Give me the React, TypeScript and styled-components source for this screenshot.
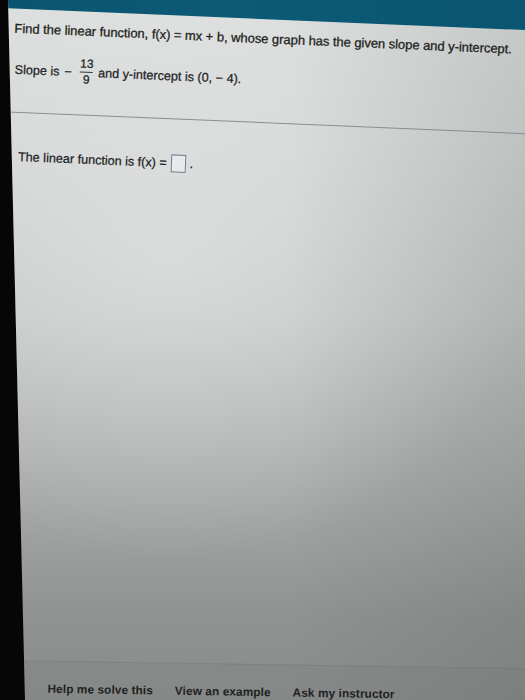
import React from "react";
import styled, { createGlobalStyle } from "styled-components";

const Global = createGlobalStyle`
  html, body { margin: 0; padding: 0; background: #050505; }
  body { font-family: "Liberation Sans", Arial, sans-serif; }
`;

const Page = styled.div`
  width: 525px;
  height: 700px;
  overflow: hidden;
  background: #060606;
`;

const Screen = styled.div`
  height: 100%;
  display: flex;
  flex-direction: column;
  overflow: hidden;
  clip-path: polygon(8px 0, 100% 0, 100% 100%, 25px 100%);
  background:
    linear-gradient(90deg, rgba(0, 0, 0, 0) 0%, rgba(0, 0, 0, 0) 55%, rgba(40, 50, 48, 0.12) 100%),
    radial-gradient(ellipse 70% 45% at 32% 35%, rgba(232, 234, 233, 0.55) 0%, rgba(232, 234, 233, 0) 100%),
    linear-gradient(180deg, #dcdfde 0%, #d3d6d5 20%, #c3c6c5 45%, #a8aba9 68%, #8f9290 88%, #898c8a 100%);
`;

const Tilted = styled.div<{ $angle: number }>`
  display: flex;
  flex-direction: column;
  width: calc(100% + 30px);
  transform-origin: 0 0;
  transform: rotate(${(p) => p.$angle}deg);
`;

const Content = styled(Tilted)`
  margin-top: -32px;
`;

const Band = styled.div`
  height: 40px;
  background: linear-gradient(90deg, #0c5470 0%, #0b5a76 40%, #0a5571 100%);
`;

const Title = styled.p`
  margin: 12px 0 0 17px;
  font-size: 13px;
  color: #1d1f20;
  letter-spacing: -0.05px;
  -webkit-text-stroke: 0.3px #1d1f20;
`;

const SlopeRow = styled.div`
  display: flex;
  align-items: center;
  gap: 5px;
  margin: 19px 0 0 19px;
  font-size: 12.6px;
  color: #222425;
  -webkit-text-stroke: 0.25px #222425;
`;

const Fraction = styled.span`
  display: inline-flex;
  flex-direction: column;
  align-items: center;
  margin-left: 3px;
  font-size: 12px;
  line-height: 13px;
`;

const FracBar = styled.span`
  width: 13px;
  height: 1px;
  background: #333;
  margin: 1px 0;
`;

const Rule = styled.hr`
  margin: 28px 0 0 4px;
  border: none;
  border-top: 1.5px solid #8a8e90;
  width: 540px;
`;

const Answer = styled.div`
  display: flex;
  align-items: center;
  gap: 4px;
  margin: 35px 0 0 26px;
  font-size: 12.6px;
  color: #222425;
  -webkit-text-stroke: 0.25px #222425;
`;

const AnswerBox = styled.span`
  display: inline-block;
  width: 13px;
  height: 16px;
  border: 1px solid #6f7f8c;
  background: #e6eaeb;
`;

const Spacer = styled.div`
  flex: 1;
`;

const Footer = styled(Tilted)`
  height: 52px;
  margin-bottom: -12px;
  background: rgba(120, 124, 122, 0.22);
  border-top: 1px solid rgba(110, 114, 112, 0.3);
  flex-direction: row;
  align-items: flex-start;
  gap: 22px;
  padding: 20px 0 0 48px;
  box-sizing: border-box;
`;

const FooterLink = styled.span`
  font-size: 11.8px;
  font-weight: 700;
  color: #1f2122;
  letter-spacing: 0.1px;
`;

export default function App() {
  return (
    <Page>
      <Global />
      <Screen>
        <Content $angle={2.4}>
          <Band />
          <Title>
            Find the linear function, f(x) = mx + b, whose graph has the given slope and y-intercept.
          </Title>
          <SlopeRow>
            <span>Slope is</span>
            <span>−</span>
            <Fraction>
              <span>13</span>
              <FracBar />
              <span>9</span>
            </Fraction>
            <span>and y-intercept is (0, − 4).</span>
          </SlopeRow>
          <Rule />
          <Answer>
            <span>The linear function is f(x) =</span>
            <AnswerBox />
            <span>.</span>
          </Answer>
        </Content>
        <Spacer />
        <Footer $angle={0.9}>
          <FooterLink>Help me solve this</FooterLink>
          <FooterLink>View an example</FooterLink>
          <FooterLink>Ask my instructor</FooterLink>
        </Footer>
      </Screen>
    </Page>
  );
}
